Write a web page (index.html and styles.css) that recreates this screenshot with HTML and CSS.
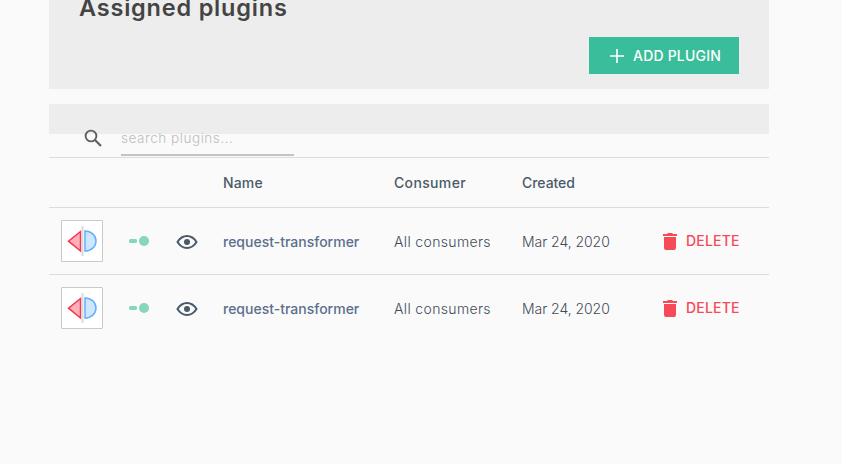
FILE: index.html
```html
<!DOCTYPE html>
<html lang="en">
<head>
<meta charset="utf-8">
<title>Assigned plugins</title>
<link rel="stylesheet" href="styles.css">
</head>
<body>
<main class="page">
  <section class="header">
    <h2 class="title">Assigned plugins</h2>
    <div class="actions">
      <button class="add-btn" type="button">
        <svg class="plus" viewBox="0 0 16 16" width="16" height="16"><path d="M8 1v14M1 8h14" stroke="#fff" stroke-width="1.6" fill="none"/></svg>
        <span>ADD PLUGIN</span>
      </button>
    </div>
  </section>
  <div class="band"></div>
  <div class="search">
    <svg class="search-icon" viewBox="0 0 20 20" width="20" height="20"><circle cx="8" cy="8" r="5.4" fill="none" stroke="#5f5f5f" stroke-width="1.9"/><path d="M12 12l6 6" stroke="#5f5f5f" stroke-width="2.1" fill="none"/></svg>
    <div class="search-field">search plugins...</div>
  </div>
  <div class="table">
    <div class="row head">
      <div class="c-icon"></div><div class="c-toggle"></div><div class="c-eye"></div>
      <div class="c-name">Name</div><div class="c-consumer">Consumer</div><div class="c-created">Created</div><div class="c-del"></div>
    </div>
    <div class="row">
      <div class="c-icon"><div class="thumb">
        <svg viewBox="0 0 40 40" width="40" height="40"><path d="M18.500 10.500V30L6.500 20.200Z" fill="#ffb0b8" stroke="#f5364e" stroke-width="1.500"/><path d="M23 10a11 10 0 0 1 0 20Z" fill="#cfe6ff" stroke="#66b0fb" stroke-width="1.500"/><path d="M20.500 5v30" stroke="#dadada" stroke-width="2"/></svg>
      </div></div>
      <div class="c-toggle"><svg viewBox="0 0 22 12" width="22" height="12"><rect x="0" y="4" width="8" height="4" rx="1.500" fill="#86d5bd"/><circle cx="15" cy="6" r="5" fill="#86d5bd"/></svg></div>
      <div class="c-eye"><svg viewBox="0 0 24 16" width="24" height="16"><path d="M2.500 8C5 4 8.300 2 12 2S19 4 21.500 8C19 12 15.700 14 12 14S5 12 2.500 8Z" fill="none" stroke="#4a5a68" stroke-width="2"/><circle cx="12" cy="8" r="3" fill="#4a5a68"/></svg></div>
      <div class="c-name link">request-transformer</div><div class="c-consumer">All consumers</div><div class="c-created">Mar 24, 2020</div>
      <div class="c-del"><svg viewBox="0 0 16 18" width="16" height="18"><path d="M5.500 2V1h5v1H15v2H1V2ZM2 5h12v11a2 2 0 0 1-2 2H4a2 2 0 0 1-2-2Z" fill="#f64a58"/></svg><span>DELETE</span></div>
    </div>
    <div class="row">
      <div class="c-icon"><div class="thumb">
        <svg viewBox="0 0 40 40" width="40" height="40"><path d="M18.500 10.500V30L6.500 20.200Z" fill="#ffb0b8" stroke="#f5364e" stroke-width="1.500"/><path d="M23 10a11 10 0 0 1 0 20Z" fill="#cfe6ff" stroke="#66b0fb" stroke-width="1.500"/><path d="M20.500 5v30" stroke="#dadada" stroke-width="2"/></svg>
      </div></div>
      <div class="c-toggle"><svg viewBox="0 0 22 12" width="22" height="12"><rect x="0" y="4" width="8" height="4" rx="1.500" fill="#86d5bd"/><circle cx="15" cy="6" r="5" fill="#86d5bd"/></svg></div>
      <div class="c-eye"><svg viewBox="0 0 24 16" width="24" height="16"><path d="M2.500 8C5 4 8.300 2 12 2S19 4 21.500 8C19 12 15.700 14 12 14S5 12 2.500 8Z" fill="none" stroke="#4a5a68" stroke-width="2"/><circle cx="12" cy="8" r="3" fill="#4a5a68"/></svg></div>
      <div class="c-name link">request-transformer</div><div class="c-consumer">All consumers</div><div class="c-created">Mar 24, 2020</div>
      <div class="c-del"><svg viewBox="0 0 16 18" width="16" height="18"><path d="M5.500 2V1h5v1H15v2H1V2ZM2 5h12v11a2 2 0 0 1-2 2H4a2 2 0 0 1-2-2Z" fill="#f64a58"/></svg><span>DELETE</span></div>
    </div>
  </div>
</main>
</body>
</html>
```
FILE: styles.css
```css
* { box-sizing: border-box; }
html, body { margin: 0; height: 100%; overflow: hidden; }
body { background: #fafafa; font-family: Inter, "Open Sans", sans-serif; color: #3f4c58; }
.page { width: 720px; margin-left: 49px; }
.header { display: flow-root; height: 89px; background: #ededed; padding: 0 30px; }
.title { margin: -6px 0 0; font-size: 23.500px; line-height: 28px; font-weight: 600; color: #444; letter-spacing: 0.8px; white-space: nowrap; }
.actions { display: flex; justify-content: flex-end; margin-top: 15px; }
.add-btn { width: 150px; height: 37px; border: 0; background: #3abd9a; color: #fff; display: flex; align-items: center; padding: 0 0 0 20px; gap: 8px; font: 500 14px Inter, sans-serif; letter-spacing: 0.2px; }
.band { height: 30px; margin-top: 15px; background: #ededed; }
.search { height: 30px; margin-top: -7px; display: flex; padding-left: 34px; position: relative; }
.search-icon { margin-top: 1px; }
.search-field { width: 173px; margin-left: 18px; height: 29px; padding-top: 1px; border-bottom: 2px solid #c4c4c4; color: #bdbdbd; font-size: 13.500px; line-height: 20px; font-weight: 300; letter-spacing: 0.55px; }
.table { font-size: 14px; font-weight: 300; }
.row { display: flex; align-items: center; height: 67px; border-top: 1px solid #dcdcdc; }
.row.head { height: 50px; font-weight: 500; color: #4a5a68; font-size: 14px; letter-spacing: 0.15px; }
.c-icon { width: 80px; padding-left: 12px; }
.c-toggle { width: 46px; display: flex; }
.c-eye { width: 48px; padding-top: 1px; display: flex; }
.c-name { width: 171px; }
.c-consumer { width: 128px; letter-spacing: 0.35px; }
.c-created { width: 140px; letter-spacing: -0.05px; }
.c-del { display: flex; align-items: center; gap: 8px; color: #f64a58; font-size: 14px; font-weight: 500; letter-spacing: 0.2px; line-height: 16px; }
.c-del span { margin-bottom: 1px; }
.link { color: #5b6f8c; font-weight: 500; font-size: 14px; letter-spacing: 0; }
.thumb { width: 42px; height: 42px; border: 1px solid #c9c9c9; background: #fff; border-radius: 1px; }
.thumb svg { display: block; }
```
